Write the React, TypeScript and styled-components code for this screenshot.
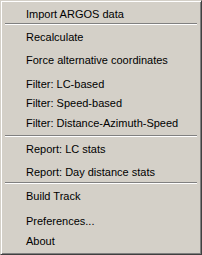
import React from "react";
import styled, { createGlobalStyle } from "styled-components";

const GlobalStyle = createGlobalStyle`
  html, body {
    margin: 0;
    padding: 0;
    background: #d4d0c8;
  }
`;

const Menu = styled.ul`
  box-sizing: border-box;
  width: 202px;
  height: 255px;
  margin: 0;
  padding: 1px 0 0;
  list-style: none;
  background: #d4d0c8;
  border: 1px solid;
  border-color: #d4d0c8 #404040 #404040 #d4d0c8;
  box-shadow: inset 1px 1px 0 #ffffff, inset -1px -1px 0 #808080;
  font-family: "Liberation Sans", Arial, sans-serif;
  font-size: 11px;
  color: #000;
  overflow: hidden;
`;

const Item = styled.li<{ $h: number }>`
  box-sizing: border-box;
  height: ${(p) => p.$h}px;
  margin: 0 1px;
  padding: 6px 0 0 24px;
  line-height: 13px;
  white-space: nowrap;
  cursor: default;
`;

const Separator = styled.li`
  height: 3px;
  margin: 0 4px;
  padding-top: 1px;
  box-sizing: border-box;

  &::before {
    content: "";
    display: block;
    height: 1px;
    background: #808080;
    border-bottom: 1px solid #ffffff;
  }
`;

type Entry = { label: string; h: number } | "sep";

const entries: Entry[] = [
  { label: "Import ARGOS data", h: 20 },
  "sep",
  { label: "Recalculate", h: 23 },
  { label: "Force alternative coordinates", h: 24 },
  { label: "Filter: LC-based", h: 19 },
  { label: "Filter: Speed-based", h: 20 },
  { label: "Filter: Distance-Azimuth-Speed", h: 23 },
  "sep",
  { label: "Report: LC stats", h: 23 },
  { label: "Report: Day distance stats", h: 21 },
  "sep",
  { label: "Build Track", h: 25 },
  { label: "Preferences...", h: 20 },
  { label: "About", h: 23 },
];

export default function App() {
  return (
    <>
      <GlobalStyle />
      <Menu>
        {entries.map((e, i) =>
          e === "sep" ? (
            <Separator key={i} />
          ) : (
            <Item key={i} $h={e.h}>
              {e.label}
            </Item>
          )
        )}
      </Menu>
    </>
  );
}
